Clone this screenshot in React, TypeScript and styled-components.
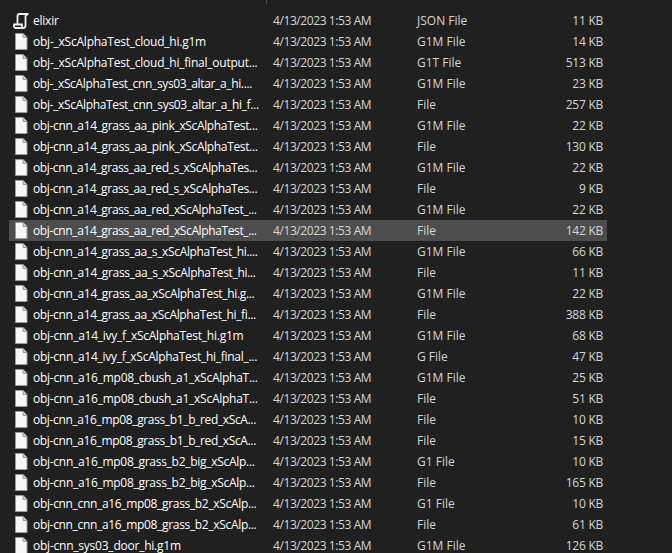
import { createGlobalStyle } from "styled-components";
import styled from "styled-components";

const GlobalStyle = createGlobalStyle`
  html, body {
    margin: 0;
    padding: 0;
    background: #202020;
    overflow: hidden;
  }
`;

const Page = styled.div`
  position: relative;
  width: 672px;
  height: 553px;
  overflow: hidden;
  background: #202020;
  padding: 10px 0 0 9px;
  box-sizing: border-box;
  font-family: "Open Sans", "Noto Sans", sans-serif;
  font-size: 12px;
`;

const HeaderTick = styled.div`
  position: absolute;
  left: 266px;
  top: 0;
  width: 1px;
  height: 4px;
  background: #4a4a4a;
`;

const Row = styled.div<{ $selected?: boolean }>`
  display: grid;
  grid-template-columns: 24px 240px 144px 140px 46px;
  align-items: center;
  width: 598px;
  height: 21px;
  background: ${(p) => (p.$selected ? "#4d4d4d" : "transparent")};
`;

const IconCell = styled.div`
  display: flex;
  align-items: center;
  justify-content: center;
`;

const Name = styled.span<{ $spacing: number }>`
  color: #ffffff;
  white-space: nowrap;
  letter-spacing: ${(p) => p.$spacing}px;
`;

const Meta = styled.span`
  color: #d6d6d6;
  white-space: nowrap;
`;

const DateText = styled(Meta)`
  letter-spacing: -0.41px;
`;

const Size = styled(Meta)`
  text-align: right;
  letter-spacing: -0.25px;
`;

function PageIcon() {
  return (
    <svg width="14" height="17" viewBox="0 0 14 17">
      <path d="M1.5 .5H9L13 4.5V16.5H1.5Z" fill="#f7f7f7" stroke="#9a9a9a" />
      <path d="M9 .5V4.5H13" fill="#d0d0d0" stroke="#9a9a9a" />
    </svg>
  );
}

function ScrollIcon() {
  return (
    <svg width="16" height="16" viewBox="0 0 16 16" fill="none" stroke="#f0f0f0" strokeWidth="1.8">
      <path d="M4.5 11V3C4.5 2 5 1 6.5 1H15.5C14 1 12.5 2 12.5 3.5V12.5C12.5 14 11.5 15 10 15H2.5C1.5 15 1 14 1 13V11.5H9V13C9 14 9.5 15 10 15" />
    </svg>
  );
}

const sameDate = "4/13/2023 1:53 AM";

// name, type, size, letter spacing that brings the name to its width in the screenshot
const files: [string, string, string, number][] = [
  ["elixir", "JSON File", "11 KB", -0.23],
  ["obj-_xScAlphaTest_cloud_hi.g1m", "G1M File", "14 KB", -0.23],
  ["obj-_xScAlphaTest_cloud_hi_final_output...", "G1T File", "513 KB", -0.23],
  ["obj-_xScAlphaTest_cnn_sys03_altar_a_hi....", "G1M File", "23 KB", -0.35],
  ["obj-_xScAlphaTest_cnn_sys03_altar_a_hi_f...", "File", "257 KB", -0.33],
  ["obj-cnn_a14_grass_aa_pink_xScAlphaTest...", "G1M File", "22 KB", -0.35],
  ["obj-cnn_a14_grass_aa_pink_xScAlphaTest...", "File", "130 KB", -0.35],
  ["obj-cnn_a14_grass_aa_red_s_xScAlphaTes...", "G1M File", "22 KB", -0.4],
  ["obj-cnn_a14_grass_aa_red_s_xScAlphaTes...", "File", "9 KB", -0.4],
  ["obj-cnn_a14_grass_aa_red_xScAlphaTest_...", "G1M File", "22 KB", -0.38],
  ["obj-cnn_a14_grass_aa_red_xScAlphaTest_...", "File", "142 KB", -0.38],
  ["obj-cnn_a14_grass_aa_s_xScAlphaTest_hi....", "G1M File", "66 KB", -0.35],
  ["obj-cnn_a14_grass_aa_s_xScAlphaTest_hi...", "File", "11 KB", -0.33],
  ["obj-cnn_a14_grass_aa_xScAlphaTest_hi.g...", "G1M File", "22 KB", -0.33],
  ["obj-cnn_a14_grass_aa_xScAlphaTest_hi_fi...", "File", "388 KB", -0.35],
  ["obj-cnn_a14_ivy_f_xScAlphaTest_hi.g1m", "G1M File", "68 KB", -0.25],
  ["obj-cnn_a14_ivy_f_xScAlphaTest_hi_final_...", "G File", "47 KB", -0.28],
  ["obj-cnn_a16_mp08_cbush_a1_xScAlphaT...", "G1M File", "25 KB", -0.26],
  ["obj-cnn_a16_mp08_cbush_a1_xScAlphaT...", "File", "51 KB", -0.26],
  ["obj-cnn_a16_mp08_grass_b1_b_red_xScA...", "File", "10 KB", -0.36],
  ["obj-cnn_a16_mp08_grass_b1_b_red_xScA...", "File", "15 KB", -0.36],
  ["obj-cnn_a16_mp08_grass_b2_big_xScAlp...", "G1 File", "10 KB", -0.28],
  ["obj-cnn_a16_mp08_grass_b2_big_xScAlp...", "File", "165 KB", -0.28],
  ["obj-cnn_cnn_a16_mp08_grass_b2_xScAlp...", "G1 File", "10 KB", -0.33],
  ["obj-cnn_cnn_a16_mp08_grass_b2_xScAlp...", "File", "61 KB", -0.33],
  ["obj-cnn_sys03_door_hi.g1m", "G1M File", "126 KB", -0.23],
];

export default function App() {
  return (
    <Page>
      <GlobalStyle />
      <HeaderTick />
      {files.map((file, index) => (
        <Row key={index} $selected={index === 10}>
          <IconCell>{index === 0 ? <ScrollIcon /> : <PageIcon />}</IconCell>
          <Name $spacing={file[3]}>{file[0]}</Name>
          <DateText>{sameDate}</DateText>
          <Meta>{file[1]}</Meta>
          <Size>{file[2]}</Size>
        </Row>
      ))}
    </Page>
  );
}
